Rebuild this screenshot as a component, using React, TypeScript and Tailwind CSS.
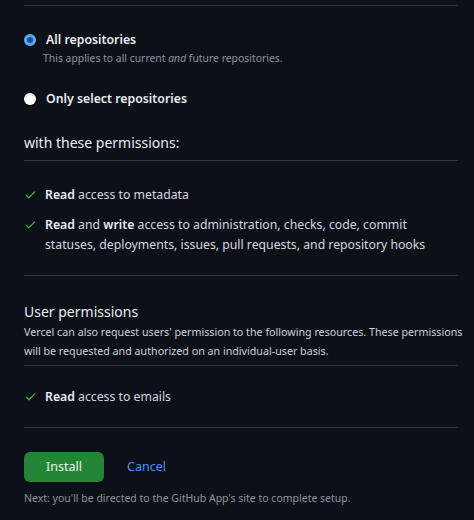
const Check = () => (
  <svg viewBox="0 0 16 16" className="w-[13px] h-[13px] shrink-0 mt-[3px]" fill="#3fb950">
    <path d="M13.78 4.22a.75.75 0 0 1 0 1.06l-7.25 7.25a.75.75 0 0 1-1.06 0L2.22 9.28a.75.75 0 0 1 1.06-1.06L6 10.94l6.72-6.72a.75.75 0 0 1 1.06 0Z" />
  </svg>
);

const Perm = ({ children }: { children: React.ReactNode }) => (
  <li className="flex gap-[8px] items-start">
    <Check />
    <p className="leading-[20px]">{children}</p>
  </li>
);

export default function App() {
  return (
    <div
      className="w-[474px] h-[520px] bg-[#0d1117] text-[#e6edf3] px-[24px] overflow-hidden"
      style={{ fontFamily: '"Noto Sans", "Open Sans", sans-serif' }}
    >
      <hr className="mt-[5px] border-[#30363d] w-[434px]" />

      <div className="mt-[25px] flex gap-[10px] items-start">
        <span className="mt-[3px] w-[12px] h-[12px] rounded-full bg-[#58a6ff] flex items-center justify-center">
          <span className="w-[6px] h-[6px] rounded-full bg-[#1f4f8f]" />
        </span>
        <div>
          <p className="text-[12.3px] font-semibold leading-[18px]">All repositories</p>
          <p className="text-[10.4px] text-[#8b949e] leading-[18px] -ml-[3px]">
            This applies to all current <em>and</em> future repositories.
          </p>
        </div>
      </div>

      <div className="mt-[23px] flex gap-[10px] items-start">
        <span className="mt-[3px] w-[12px] h-[12px] rounded-full bg-white" />
        <p className="text-[12.3px] font-semibold leading-[18px]">Only select repositories</p>
      </div>

      <h3 className="mt-[24px] text-[14px] leading-[22px]">with these permissions:</h3>
      <hr className="mt-[6px] border-[#30363d] w-[434px]" />

      <ul className="mt-[24px] text-[12.25px] flex flex-col gap-[10px] text-[#d1d7e0]">
        <Perm>
          <b className="font-semibold text-[#e6edf3]">Read</b> access to metadata
        </Perm>
        <Perm>
          <b className="font-semibold text-[#e6edf3]">Read</b> and{" "}
          <b className="font-semibold text-[#e6edf3]">write</b> access to administration, checks, code, commit
          statuses, deployments, issues, pull requests, and repository hooks
        </Perm>
      </ul>
      <hr className="mt-[20px] border-[#30363d] w-[434px]" />

      <h3 className="mt-[25px] text-[14px] leading-[22px]">User permissions</h3>
      <p className="text-[10.7px] leading-[19px] text-[#c9d1d9] w-[446px]">
        Vercel can also request users' permission to the following resources. These permissions will be
        requested and authorized on an individual-user basis.
      </p>
      <hr className="mt-[4px] border-[#30363d] w-[434px]" />

      <ul className="mt-[21px] text-[12.25px] text-[#d1d7e0]">
        <Perm>
          <b className="font-semibold text-[#e6edf3]">Read</b> access to emails
        </Perm>
      </ul>
      <hr className="mt-[20px] border-[#30363d] w-[434px]" />

      <div className="mt-[24px] flex items-center gap-[23px]">
        <button className="w-[80px] h-[30px] rounded-[6px] bg-[#238636] text-[#e6f4ea] text-[12.5px]">
          Install
        </button>
        <a className="text-[12.5px] text-[#4493f8]">Cancel</a>
      </div>
      <p className="mt-[7px] text-[10.5px] text-[#8b949e] leading-[18px]">
        Next: you'll be directed to the GitHub App's site to complete setup.
      </p>
    </div>
  );
}
